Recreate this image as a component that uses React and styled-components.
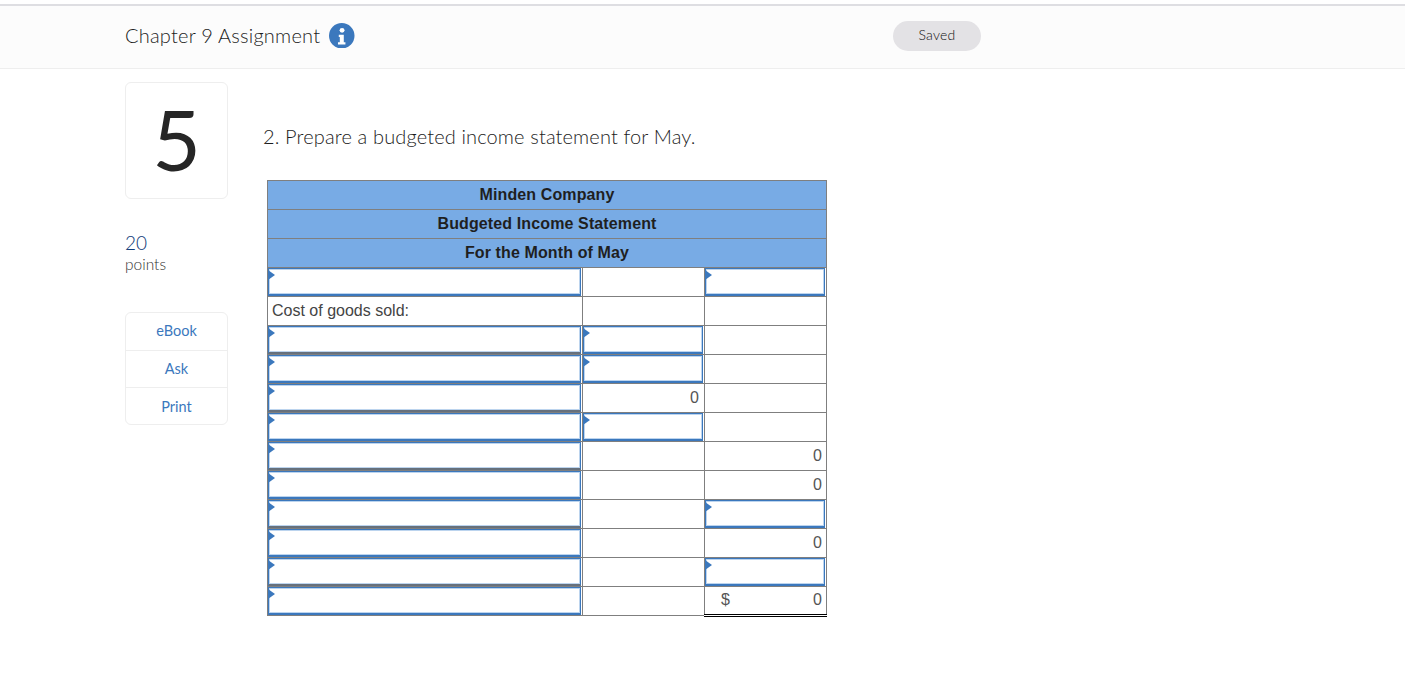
import React from "react";
import styled, { createGlobalStyle } from "styled-components";

const Global = createGlobalStyle`
  html, body { margin: 0; padding: 0; background: #fff; }
  body { font-family: Lato, "Open Sans", sans-serif; color: #333; }
`;
const Page = styled.div`width: 1405px; height: 694px; overflow: hidden; padding-top: 4px; box-sizing: border-box;`;
const Header = styled.header`
  height: 65px; box-sizing: border-box; background: #fcfcfc;
  border-top: 2px solid #dedee2; border-bottom: 1px solid #eeeeee;
  padding: 0 0 2px 125px; display: flex; align-items: center;
`;
const Title = styled.h1`margin: -2px 0 0; font-size: 20px; font-weight: 300; color: #1c1c1c; letter-spacing: 0.22px; width: 204px;`;
const InfoIcon = styled.svg`display: block; width: 25.5px; height: 25.5px; margin-top: -1px;`;
const SavedPill = styled.div`
  margin-left: 538.5px; width: 88px; height: 30px; border-radius: 15px; background: #e3e2e5; padding-bottom: 3px; box-sizing: border-box;
  display: flex; align-items: center; justify-content: center; font-size: 14px; font-weight: 300; letter-spacing: 0.2px; color: #111;
`;
const Body = styled.div`display: flex; padding: 13px 0 0 125px;`;
const Side = styled.aside`width: 103px; display: flex; flex-direction: column;`;
const NumberCard = styled.div`
  height: 117px; box-sizing: border-box; border: 1px solid #eeeeee; border-radius: 6px; padding-bottom: 4px;
  display: flex; align-items: center; justify-content: center;
  font-size: 84px; line-height: 1; color: #262626; font-weight: 400;
`;
const Points = styled.div`margin-top: 33px; font-size: 19px; font-weight: 300; line-height: 22px; color: #0f3c78;`;
const PointsLabel = styled.div`font-size: 15.5px; font-weight: 300; line-height: 20px; color: #333;`;
const Menu = styled.nav`
  margin-top: 38px; border: 1px solid #eeeeee; border-radius: 6px; display: flex; flex-direction: column;
`;
const MenuItem = styled.a`
  height: ${p => p.$h}px; box-sizing: border-box; padding-bottom: ${p => (p.$lift ? 2 : 0)}px;
  display: flex; align-items: center; justify-content: center;
  font-size: 14.5px; font-weight: 400; color: #3b78bd; border-top: ${p => (p.$first ? "none" : "1px solid #eeeeee")};
`;
const Main = styled.main`margin-left: 35px; display: flex; flex-direction: column;`;
const Question = styled.p`margin: 41px 0 0; font-size: 20px; font-weight: 300; line-height: 26px; color: #1c1c1c; letter-spacing: 0.14px;`;
const Sheet = styled.table`
  margin: 31px 0 0 4px; width: 559px; table-layout: fixed; border-collapse: collapse;
  font-family: "Liberation Sans", Arial, sans-serif; font-size: 16px; color: #333;
`;
const Row = styled.tr`height: 29px;`;
const HeadCell = styled.th`
  border: 1px solid #7f7f7f; background: #78abe5; color: #1f1f1f; font-size: 16px; font-weight: 700; padding: 0; height: 28px; letter-spacing: 0.12px;
`;
const Cell = styled.td`
  border: 1px solid #7f7f7f; padding: 0; height: 28px; box-sizing: border-box;
  border-top-color: ${p => (p.$rule ? "#000" : "#7f7f7f")};
  border-bottom: ${p => (p.$double ? "3px double #000" : "")};
`;
const LabelText = styled.div`padding-left: 4px; line-height: 26px; color: #444;`;
const NumberText = styled.div`display: flex; justify-content: space-between; padding: 0 ${p => (p.$tight ? 4 : 5)}px 1px 16px; line-height: 26px; color: #555;`;
const NumberRight = styled.span`margin-left: auto;`;
const EntryWrap = styled.div`position: relative; height: 28px; margin-right: 1px;
  &::before {
    content: ""; position: absolute; left: 0; top: 2px; border-left: 7px solid #3b78bd;
    border-top: 5px solid transparent; border-bottom: 5px solid transparent;
  }
`;
const Entry = styled.input`
  display: block; width: 100%; height: 100%; box-sizing: border-box; margin: 0; padding: 0; background: #fff;
  border: 1px solid #3b78bd; border-bottom-width: 2px; border-bottom-color: ${p => (p.$muted ? "#66707c" : "#3b78bd")};
  border-radius: 0; box-shadow: inset 0 0 0 1px #bcd4ee; outline: none;
`;
const Blank = ({ muted, ...p }) => <Cell {...p}><EntryWrap><Entry $muted={muted} aria-label="entry" /></EntryWrap></Cell>;

const I = "input";
const rows = [
  [I, "", I],
  ["label", "", ""],
  [I, I, ""],
  [I, I, ""],
  [I, "0", ""],
  [I, I, ""],
  [I, "", "0"],
  [I, "", "0"],
  [I, "", I],
  [I, "", "0"],
  [I, "", I],
  [I, "", "$0"],
];

const renderCell = (v, key, extra, muted) => {
  if (v === I) return <Blank key={key} muted={muted} {...extra} />;
  if (v === "label") return <Cell key={key} {...extra}><LabelText>Cost of goods sold:</LabelText></Cell>;
  if (v === "$0") return <Cell key={key} {...extra} $double><NumberText $tight><span>$</span><NumberRight>0</NumberRight></NumberText></Cell>;
  if (v === "") return <Cell key={key} {...extra} />;
  return <Cell key={key} {...extra}><NumberText $tight={key === 2}><NumberRight>{v}</NumberRight></NumberText></Cell>;
};

export default function App() {
  return (
    <Page>
      <Global />
      <Header>
        <Title>Chapter 9 Assignment</Title>
        <InfoIcon viewBox="0 0 25 25" aria-hidden="true">
          <circle cx="12.5" cy="12.5" r="12.5" fill="#3b78bd" />
          <circle cx="12.8" cy="7.2" r="2.4" fill="#fff" />
          <path d="M9.6 11.6h4.9v7.2h1.6v2.2H8.8v-2.2h1.8v-5h-1z" fill="#fff" />
        </InfoIcon>
        <SavedPill>Saved</SavedPill>
      </Header>
      <Body>
        <Side>
          <NumberCard>5</NumberCard>
          <Points>20</Points>
          <PointsLabel>points</PointsLabel>
          <Menu>
            <MenuItem $first $lift $h={37}>eBook</MenuItem>
            <MenuItem $lift $h={37}>Ask</MenuItem>
            <MenuItem $h={37}>Print</MenuItem>
          </Menu>
        </Side>
        <Main>
          <Question>2. Prepare a budgeted income statement for May.</Question>
          <Sheet>
            <colgroup>
              <col style={{ width: 315 }} />
              <col style={{ width: 122 }} />
              <col style={{ width: 122 }} />
            </colgroup>
            <thead>
              <Row><HeadCell colSpan={3}>Minden Company</HeadCell></Row>
              <Row><HeadCell colSpan={3}>Budgeted Income Statement</HeadCell></Row>
              <Row><HeadCell colSpan={3}>For the Month of May</HeadCell></Row>
            </thead>
            <tbody>
              {rows.map((r, i) => {
                const prev = rows[i - 1];
                return (
                  <Row key={i}>
                    {r.map((v, c) => renderCell(v, c, {
                      $rule: (v === "0" && prev && prev[c] === I) || (c === 2 && v === "$0") || (c === 2 && v === "0" && prev[c] === "")
                    }, c === 0 && i >= 2 && i % 2 === 0))}
                  </Row>
                );
              })}
            </tbody>
          </Sheet>
        </Main>
      </Body>
    </Page>
  );
}
